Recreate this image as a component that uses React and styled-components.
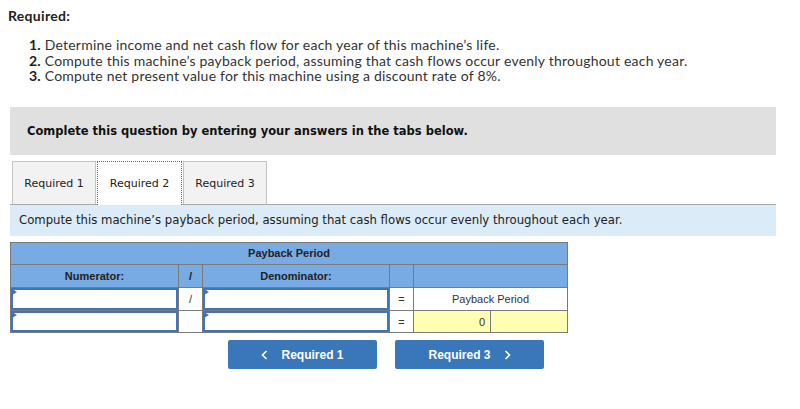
import React from 'react';
import styled, { createGlobalStyle } from 'styled-components';

const GlobalStyle = createGlobalStyle`
  body {
    margin: 0;
    background: #fff;
    color: #222;
  }
`;

const Page = styled.div`
  padding: 8px 24px 0 10px;
  width: 766px;
`;

const Heading = styled.div`
  font-family: Lato, "Liberation Sans", sans-serif;
  font-weight: 700;
  font-size: 14px;
  letter-spacing: 0.3px;
  margin-left: -2px;
  line-height: 16px;
`;

const Steps = styled.ol`
  list-style: none;
  margin: 13px 0 0;
  padding: 0 0 0 19px;
  font-family: Lato, "Liberation Sans", sans-serif;
  font-size: 14px;
  letter-spacing: 0.22px;
  line-height: 15.5px;
  color: #333;
  b { font-weight: 700; color: #222; }
`;

const Banner = styled.div`
  margin-top: 23px;
  background: #e0e0e0;
  height: 48px;
  display: flex;
  align-items: center;
  padding-left: 17px;
  font-family: "DejaVu Sans", Verdana, sans-serif;
  font-weight: 700;
  font-size: 11.5px;
  color: #111;
`;

const TabBar = styled.div`
  margin-top: 6px;
  display: flex;
  padding-left: 2px;
  gap: 1px;
  border-bottom: 1px solid #a9a9a9;
`;

const Tab = styled.div`
  width: ${p => p.$w}px;
  display: flex;
  align-items: center;
  justify-content: center;
  padding-top: 1px;
  font-family: "DejaVu Sans", Verdana, sans-serif;
  font-size: 11px;
  color: #222;
  box-sizing: border-box;
  background: ${p => (p.$active ? '#fff' : '#f2f2f2')};
  border: ${p => (p.$active ? '1px dotted #3f6fb5' : '1px solid #c4c4c4')};
  border-bottom: none;
  margin-bottom: ${p => (p.$active ? '-1px' : '0')};
  height: ${p => (p.$active ? '44px' : '43px')};
`;

const Info = styled.div`
  background: #dcebf8;
  height: 31px;
  display: flex;
  align-items: center;
  padding-left: 9px;
  font-family: "DejaVu Sans", Verdana, sans-serif;
  font-size: 11.7px;
  color: #222;
`;

const Grid = styled.table`
  margin-top: 6px;
  border-collapse: collapse;
  width: 557px;
  table-layout: fixed;
  font-family: "Liberation Sans", Arial, sans-serif;
  font-size: 11px;
  color: #222;
`;

const Head = styled.th`
  background: #78abe3;
  border: 1px solid #7a7a7a;
  height: ${p => p.$h}px;
  padding: 0;
  font-weight: 700;
  font-size: 11px;
  color: #222;
`;

const Cell = styled.td`
  border: 1px solid #7a7a7a;
  height: ${p => p.$h}px;
  padding: 0;
  padding-top: 1px;
  text-align: ${p => p.$align || 'center'};
  background: ${p => (p.$yellow ? '#ffffb4' : '#fff')};
  padding-right: ${p => (p.$align === 'right' ? '5px' : '0')};
  color: #333;
`;

const InputCell = styled.td`
  border: 1px solid #7a7a7a;
  padding: 0;
  height: ${p => p.$h}px;
  position: relative;
`;

const Field = styled.div`
  position: absolute;
  inset: 0;
  border: 2px solid #3e74b8;
  background: #fff;
  &::before {
    content: '';
    position: absolute;
    left: -1px;
    top: -1px;
    border-left: 5px solid #3e74b8;
    border-top: 3px solid transparent;
    border-bottom: 3px solid transparent;
  }
`;

const Nav = styled.div`
  display: flex;
  gap: 18px;
  margin: 7px 0 0 218px;
`;

const NavButton = styled.button`
  width: 149px;
  height: 29px;
  background: #3a76ba;
  border: none;
  border-radius: 2px;
  color: #fff;
  font-family: "Liberation Sans", Arial, sans-serif;
  font-weight: 700;
  font-size: 12px;
  display: flex;
  align-items: center;
  justify-content: center;
  gap: 13px;
  padding: 1px 0 0;
  svg { display: block; }
`;

const Chevron = ({ dir }) => (
  <svg width="7" height="10" viewBox="0 0 7 10">
    <path
      d={dir === 'left' ? 'M5.5 1 L1.5 5 L5.5 9' : 'M1.5 1 L5.5 5 L1.5 9'}
      fill="none"
      stroke="#fff"
      strokeWidth="1.6"
    />
  </svg>
);

export default function App() {
  return (
    <Page>
      <GlobalStyle />
      <Heading>Required:</Heading>
      <Steps>
        <li><b>1.</b> Determine income and net cash flow for each year of this machine’s life.</li>
        <li><b>2.</b> Compute this machine’s payback period, assuming that cash flows occur evenly throughout each year.</li>
        <li><b>3.</b> Compute net present value for this machine using a discount rate of 8%.</li>
      </Steps>
      <Banner>Complete this question by entering your answers in the tabs below.</Banner>
      <TabBar>
        <Tab $w={84}>Required 1</Tab>
        <Tab $w={85} $active>Required 2</Tab>
        <Tab $w={84}>Required 3</Tab>
      </TabBar>
      <Info>Compute this machine’s payback period, assuming that cash flows occur evenly throughout each year.</Info>
      <Grid>
        <colgroup>
          <col style={{ width: 168 }} />
          <col style={{ width: 24 }} />
          <col style={{ width: 187 }} />
          <col style={{ width: 24 }} />
          <col style={{ width: 77 }} />
          <col style={{ width: 77 }} />
        </colgroup>
        <thead>
          <tr><Head colSpan={6} $h={21}>Payback Period</Head></tr>
          <tr>
            <Head $h={22}>Numerator:</Head>
            <Head $h={22}>/</Head>
            <Head $h={22}>Denominator:</Head>
            <Head $h={22} />
            <Head $h={22} colSpan={2} />
          </tr>
        </thead>
        <tbody>
          <tr>
            <InputCell $h={21}><Field /></InputCell>
            <Cell $h={21}>/</Cell>
            <InputCell $h={21}><Field /></InputCell>
            <Cell $h={21}>=</Cell>
            <Cell $h={21} colSpan={2}>Payback Period</Cell>
          </tr>
          <tr>
            <InputCell $h={20}><Field /></InputCell>
            <Cell $h={20} />
            <InputCell $h={20}><Field /></InputCell>
            <Cell $h={20}>=</Cell>
            <Cell $h={20} $yellow $align="right">0</Cell>
            <Cell $h={20} $yellow />
          </tr>
        </tbody>
      </Grid>
      <Nav>
        <NavButton><Chevron dir="left" />Required 1</NavButton>
        <NavButton>Required 3<Chevron dir="right" /></NavButton>
      </Nav>
    </Page>
  );
}
